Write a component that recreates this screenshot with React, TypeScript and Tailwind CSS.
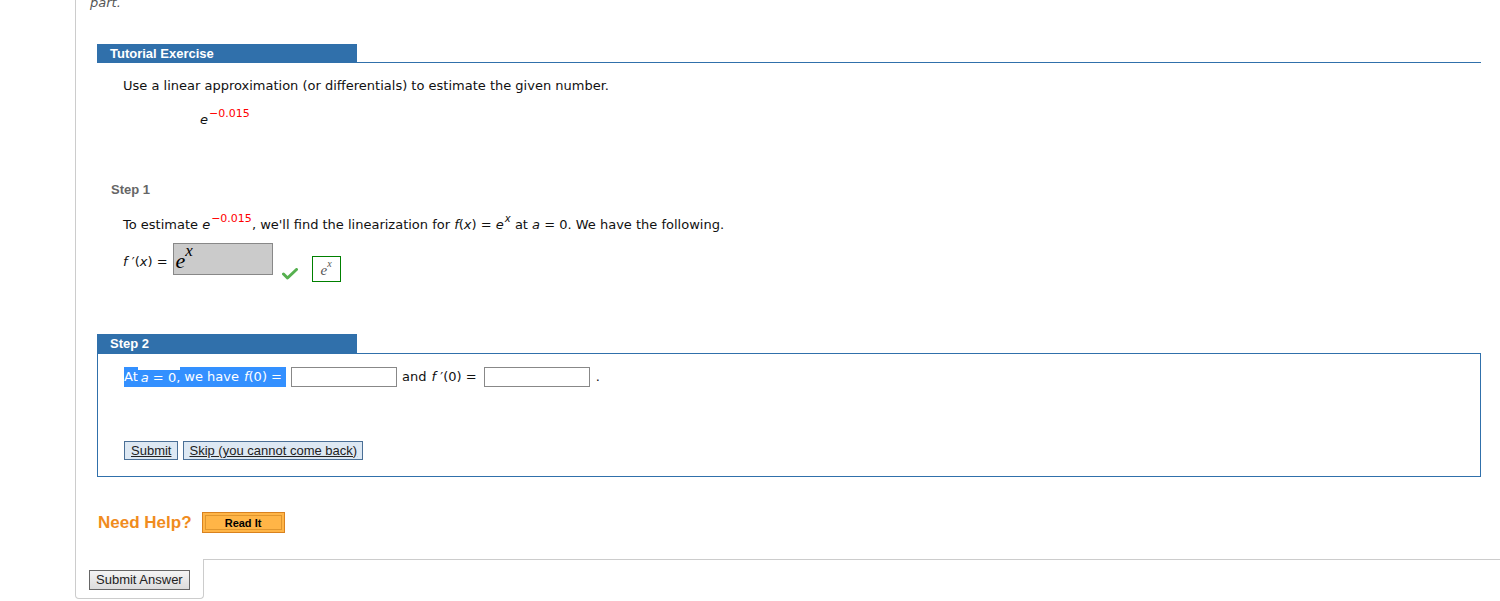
const verdana = "font-['DejaVu_Sans',Verdana,sans-serif]";
const arial = "font-['Liberation_Sans',Arial,sans-serif]";

function SectionHeader({ title }: { title: string }) {
  return (
    <div className="flex items-end">
      <div
        className={`w-[260px] h-[19px] bg-[#3070ab] pl-[13px] text-[13px] font-bold leading-[19px] text-white ${arial}`}
      >
        {title}
      </div>
      <div className="h-px flex-1 bg-[#3070ab]" />
    </div>
  );
}

function Ex({ sup, red }: { sup: string; red?: boolean }) {
  return (
    <>
      <i>e</i>
      <sup
        className={`relative -top-[7px] ml-[1px] text-[11px] ${red ? "text-[#ff0000]" : ""}`}
      >
        {sup}
      </sup>
    </>
  );
}

export default function App() {
  return (
    <div className="h-[601px] w-[1500px] overflow-hidden bg-white">
      <div className="ml-[75px] flex h-[599px] flex-col">
        <div className="flex-1 border-l border-[#cccccc]">
          <p
            className={`-mt-[7px] ml-[14px] text-[13px] italic text-[#555] ${verdana}`}
          >
            part.
          </p>

          <div className="ml-[21px] mr-[19px] mt-[31px]">
            <SectionHeader title="Tutorial Exercise" />
          </div>

          <div className={`ml-[47px] text-[13px] text-[#111] ${verdana}`}>
            <p className="mt-[13px]">
              Use a linear approximation (or differentials) to estimate the
              given number.
            </p>
            <p className="ml-[77px] mt-[15px]">
              <Ex sup="−0.015" red />
            </p>
          </div>

          <p
            className={`ml-[35px] mt-[50px] text-[13px] font-bold text-[#666] ${arial}`}
          >
            Step 1
          </p>

          <div className={`ml-[47px] text-[13px] text-[#111] ${verdana}`}>
            <p className="mt-[16px]">
              To estimate <Ex sup="−0.015" red />, we&apos;ll find the
              linearization for <i>f</i>(<i>x</i>) ={" "}
              <i>e</i>
              <sup className="relative -top-[7px] ml-[1px] text-[10px]">
                <i>x</i>
              </sup>{" "}
              at <i>a</i> = 0. We have the following.
            </p>
            <div className="mt-[8px] flex items-start">
              <span className="mt-[9px]">
                <i>f</i> ′(<i>x</i>) =
              </span>
              <div className="ml-[5px] h-[32px] w-[100px] border border-[#888] bg-[#cbcbcb] pl-[2px] font-['Liberation_Serif',serif] text-[22px] leading-[34px] text-black">
                <i>e</i>
                <sup className="relative -top-[12px] text-[17px]">
                  <i>x</i>
                </sup>
              </div>
              <svg
                className="ml-[9px] mt-[25px]"
                width="16"
                height="12"
                viewBox="0 0 16 12"
              >
                <path
                  d="M1.5 6 L5.5 10 L14.5 1.5"
                  fill="none"
                  stroke="#56b04f"
                  strokeWidth="3"
                  strokeLinecap="round"
                  strokeLinejoin="round"
                />
              </svg>
              <div className="ml-[14px] mt-[13px] flex h-[26px] w-[29px] items-center justify-center border border-[#008000] pt-[4px] font-['Liberation_Serif',serif] text-[15px] italic text-[#555]">
                e
                <sup className="relative -top-[7px] text-[10px]">x</sup>
              </div>
            </div>
          </div>

          <div className="ml-[21px] mr-[19px] mt-[52px]">
            <div className="flex items-end">
              <div
                className={`h-[19px] w-[260px] bg-[#3070ab] pl-[13px] text-[13px] font-bold leading-[19px] text-white ${arial}`}
              >
                Step 2
              </div>
            </div>
            <div className="h-[124px] border border-[#3070ab] pl-[26px] pt-[13px]">
              <div
                className={`flex items-center text-[13px] text-[#111] ${verdana}`}
              >
                <span className="flex h-[20px] items-center bg-[#3390ff] text-white">
                  At
                </span>
                <span className="flex h-[17px] items-center self-end bg-[#3390ff] pl-[3px] text-white">
                  <i>a</i>&nbsp;= 0,
                </span>
                <span className="flex h-[20px] items-center bg-[#3390ff] pl-[4px] pr-[4px] text-white">
                  we have <i className="ml-[5px]">f</i>(0) =
                </span>
                <input
                  type="text"
                  className="ml-[5px] h-[20px] w-[106px] border border-[#888] bg-white"
                />
                <span className="ml-[5px]">
                  and <i className="ml-[1px]">f</i> ′(0) =
                </span>
                <input
                  type="text"
                  className="ml-[7px] h-[20px] w-[106px] border border-[#888] bg-white"
                />
                <span className="ml-[6px]">.</span>
              </div>
              <div className={`mt-[54px] flex gap-[5px] ${arial}`}>
                <button
                  type="button"
                  className="h-[19px] border border-[#4a6f96] bg-[#dde8f3] px-[6px] text-[13px] leading-[17px] text-[#222] underline"
                >
                  Submit
                </button>
                <button
                  type="button"
                  className="h-[19px] border border-[#4a6f96] bg-[#dde8f3] px-[5px] text-[13px] leading-[17px] text-[#222] underline"
                >
                  Skip (you cannot come back)
                </button>
              </div>
            </div>
          </div>

          <div className={`ml-[22px] mt-[33px] flex items-center ${arial}`}>
            <span className="text-[17px] font-bold text-[#f08c1e]">
              Need Help?
            </span>
            <button
              type="button"
              className="ml-[10px] h-[21px] w-[83px] border border-[#d9821f] bg-[#ffb547] p-[2px]"
            >
              <span className="block h-full w-full border border-[#e0962e] text-[11px] font-bold leading-[14px] text-black">
                Read It
              </span>
            </button>
          </div>
        </div>

        <div className="flex h-[40px]">
          <div className="w-[129px] rounded-b-[4px] border-x border-b border-[#cccccc] pl-[13px] pt-[11px]">
            <button
              type="button"
              className={`block h-[20px] border border-[#666] bg-gradient-to-b from-[#f4f4f4] to-[#dcdcdc] px-[6px] text-[13px] leading-[18px] text-[#222] ${arial}`}
            >
              Submit Answer
            </button>
          </div>
          <div className="flex-1 border-t border-[#cccccc]" />
        </div>
      </div>
    </div>
  );
}
